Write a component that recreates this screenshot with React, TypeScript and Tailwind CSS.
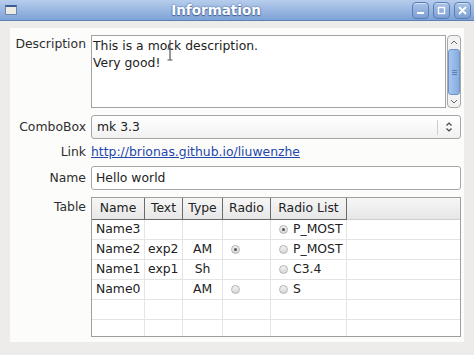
import React from "react";

const font = { fontFamily: '"DejaVu Sans", "Noto Sans", sans-serif' };

function Radio({ checked }: { checked?: boolean }) {
  return (
    <span className="inline-flex h-[9px] w-[9px] shrink-0 items-center justify-center rounded-full border border-[#b4b4b4] bg-gradient-to-b from-[#f4f4f4] to-[#d6d6d6]">
      {checked && <span className="h-[3px] w-[3px] rounded-full bg-[#555]" />}
    </span>
  );
}

function TitleButton({ kind }: { kind: "min" | "max" | "close" }) {
  return (
    <div className="flex h-[17px] w-[17px] items-center justify-center rounded-[4px] border border-[#5b7db5] bg-gradient-to-b from-[#a9c3e8] to-[#7d9fd3] shadow-[inset_0_1px_0_rgba(255,255,255,0.5)]">
      <svg width="11" height="11" viewBox="0 0 11 11">
        {kind === "min" && <rect x="2" y="7" width="7" height="2" fill="#fff" />}
        {kind === "max" && (
          <rect x="2.5" y="2.5" width="6" height="6" fill="none" stroke="#fff" strokeWidth="1.4" />
        )}
        {kind === "close" && (
          <path d="M2.5 2.5 L8.5 8.5 M8.5 2.5 L2.5 8.5" stroke="#fff" strokeWidth="1.8" strokeLinecap="round" />
        )}
      </svg>
    </div>
  );
}

const rows = [
  { name: "Name3", text: "", type: "", radio: null as null | boolean, list: "P_MOST", listOn: true },
  { name: "Name2", text: "exp2", type: "AM", radio: true, list: "P_MOST", listOn: false },
  { name: "Name1", text: "exp1", type: "Sh", radio: null, list: "C3.4", listOn: false },
  { name: "Name0", text: "", type: "AM", radio: false, list: "S", listOn: false },
  null,
  null,
];

const cols = "grid grid-cols-[53px_38px_40px_48px_76px_1fr]";

export default function App() {
  return (
    <div className="flex h-[355px] w-[474px] flex-col bg-[#edeceb] text-[12.4px] text-[#2e2e2e]" style={font}>
      {/* title bar */}
      <div className="flex h-[21px] shrink-0 items-center border-b border-[#5f80b6] bg-gradient-to-b from-[#b7cdec] to-[#7ea2d6] pl-[5px] pr-[3px]">
        <div className="h-[10px] w-[12px] border border-[#6d86ad] border-t-[2px] border-t-[#3c5d93] bg-[#ecebe3]" />
        <div className="flex-1 pl-[3px] text-center text-[13.5px] font-bold text-white [text-shadow:0_0_2px_#3d5f96,0_1px_1px_#3d5f96]">
          Information
        </div>
        <div className="flex gap-[4px]">
          <TitleButton kind="min" />
          <TitleButton kind="max" />
          <TitleButton kind="close" />
        </div>
      </div>

      {/* body */}
      <div className="flex min-h-0 flex-1 px-[10px] pb-[13px] pt-[7px]">
        <div className="flex min-h-0 flex-1 flex-col bg-[#fcfcfb] pb-[5px] pr-[3px] pt-[7px]">
          {/* Description */}
          <div className="flex">
            <div className="w-[81px] shrink-0 pr-[5px] text-right">Description</div>
            <div className="flex flex-1">
              <div className="relative h-[73px] flex-1 border border-[#a3a3a3] bg-white px-[1px] pt-[1px] leading-[17px] text-[#222]">
                <div>This is a mock description.</div>
                <div>Very good!</div>
                <svg className="absolute left-[74px] top-[4px]" width="8" height="22" viewBox="0 0 8 22">
                  <path d="M4 0 V11 M1.5 9 H6.5 M4 11 V20 M1.5 20 H6.5" stroke="#555" strokeWidth="1.2" fill="none" />
                </svg>
              </div>
              <div className="ml-[1px] flex w-[14px] flex-col rounded-[4px] border border-[#a8a8a8] bg-[#f2f2f2]">
                <div className="flex h-[13px] items-center justify-center">
                  <svg width="8" height="5" viewBox="0 0 8 5">
                    <path d="M1 4 L4 1 L7 4" stroke="#666" strokeWidth="1" fill="none" />
                  </svg>
                </div>
                <div className="flex flex-1 items-center justify-center rounded-[3px] border border-[#6f92c8] bg-gradient-to-r from-[#a9c6ee] to-[#85acdf]">
                  <div className="flex flex-col gap-[1px]">
                    <div className="h-[1px] w-[5px] bg-[#5f7fb3]" />
                    <div className="h-[1px] w-[5px] bg-[#5f7fb3]" />
                    <div className="h-[1px] w-[5px] bg-[#5f7fb3]" />
                  </div>
                </div>
                <div className="flex h-[12px] items-center justify-center">
                  <svg width="8" height="5" viewBox="0 0 8 5">
                    <path d="M1 1 L4 4 L7 1" stroke="#666" strokeWidth="1" fill="none" />
                  </svg>
                </div>
              </div>
            </div>
          </div>

          {/* ComboBox */}
          <div className="mt-[7px] flex items-center">
            <div className="w-[81px] shrink-0 pr-[5px] text-right">ComboBox</div>
            <div className="flex h-[24px] flex-1 items-center rounded-[3px] border border-[#a6a6a6] bg-gradient-to-b from-white to-[#f1f1f1]">
              <div className="flex-1 pl-[5px] text-[#222]">mk 3.3</div>
              <div className="h-[15px] w-[1px] bg-[#cfcfcf]" />
              <div className="flex w-[22px] justify-center">
                <svg width="8" height="12" viewBox="0 0 8 12">
                  <path d="M1.5 4.5 L4 2 L6.5 4.5 M1.5 7.5 L4 10 L6.5 7.5" stroke="#444" strokeWidth="1.2" fill="none" />
                </svg>
              </div>
            </div>
          </div>

          {/* Link */}
          <div className="mt-[3px] flex h-[21px] items-center">
            <div className="w-[81px] shrink-0 pr-[5px] text-right">Link</div>
            <a className="text-[#2447ab] underline" href="#">
              http://brionas.github.io/liuwenzhe
            </a>
          </div>

          {/* Name */}
          <div className="mt-[3px] flex items-center">
            <div className="w-[81px] shrink-0 pr-[5px] text-right">Name</div>
            <div className="flex h-[24px] flex-1 items-center rounded-[3px] border border-[#a6a6a6] bg-white pl-[4px] text-[#222]">
              Hello world
            </div>
          </div>

          {/* Table */}
          <div className="mt-[7px] flex min-h-0 flex-1">
            <div className="w-[81px] shrink-0 pr-[5px] pt-[1px] text-right">Table</div>
            <div className="flex min-h-0 flex-1 flex-col overflow-hidden border border-[#9f9f9f] bg-white text-[#222]">
              <div className={`${cols} h-[22px] shrink-0 bg-gradient-to-b from-[#f6f6f6] to-[#e6e6e6]`}>
                {["Name", "Text", "Type", "Radio", "Radio List"].map((h) => (
                  <div
                    key={h}
                    className="flex items-center justify-center border-b border-r border-[#6a6a6a]"
                  >
                    {h}
                  </div>
                ))}
                <div className="border-b border-[#d0d0d0]" />
              </div>
              {rows.map((r, i) => (
                <div
                  key={i}
                  className={`${cols} h-[20px] shrink-0 border-b border-[#e4e4e4] last:min-h-0 last:shrink last:border-b-0`}
                >
                  <div className="flex items-center border-r border-[#e4e4e4] pl-[4px]">{r?.name}</div>
                  <div className="flex items-center border-r border-[#e4e4e4] pl-[3px]">{r?.text}</div>
                  <div className="flex items-center justify-center border-r border-[#e4e4e4]">{r?.type}</div>
                  <div className="flex items-center border-r border-[#e4e4e4] pl-[8px]">
                    {r && r.radio !== null && <Radio checked={r.radio} />}
                  </div>
                  <div className="flex items-center gap-[5px] border-r border-[#e4e4e4] pl-[8px]">
                    {r && (
                      <>
                        <Radio checked={r.listOn} />
                        <span>{r.list}</span>
                      </>
                    )}
                  </div>
                  <div />
                </div>
              ))}
            </div>
          </div>
        </div>
      </div>
    </div>
  );
}
